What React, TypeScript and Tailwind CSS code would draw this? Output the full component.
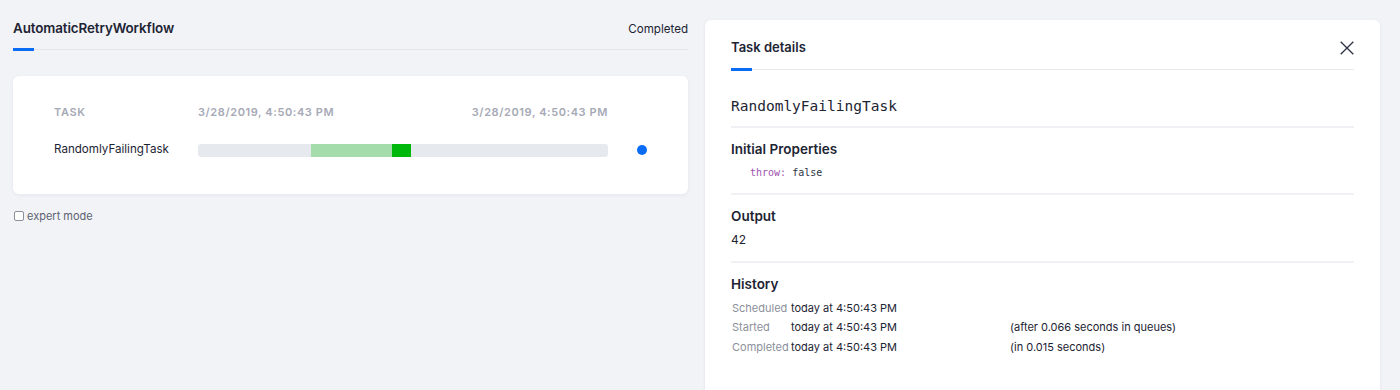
const history = [
  { label: "Scheduled", when: "today at 4:50:43 PM", note: "" },
  { label: "Started", when: "today at 4:50:43 PM", note: "(after 0.066 seconds in queues)" },
  { label: "Completed", when: "today at 4:50:43 PM", note: "(in 0.015 seconds)" },
];

function CloseIcon() {
  return (
    <svg width="14" height="14" viewBox="0 0 14 14" fill="none" stroke="#2a3140" strokeWidth="1.3">
      <path d="M0.7 0.7L13.3 13.3M13.3 0.7L0.7 13.3" />
    </svg>
  );
}

export default function App() {
  return (
    <div
      className="flex h-[390px] w-[1400px] gap-[17px] overflow-hidden bg-[#f2f3f7] pl-[13px] pr-[20px] text-[#1d2433]"
      style={{ fontFamily: '"Inter", "Noto Sans", sans-serif' }}
    >
      {/* Left column */}
      <div className="flex w-[675px] flex-col">
        <div className="relative flex h-[50px] items-end justify-between border-b border-[#e2e4ea] pb-[11px]">
          <span className="text-[13.4px] font-semibold tracking-[-0.1px]">AutomaticRetryWorkflow</span>
          <span className="text-[11.6px]">Completed</span>
          <span className="absolute -bottom-[2px] left-0 h-[3px] w-[21px] bg-[#0a6cf5]" />
        </div>

        <div className="mt-[26px] h-[118px] rounded-[6px] bg-white px-[41px] pt-[28px] shadow-[0_1px_4px_rgba(30,40,70,0.06)]">
          <div className="flex h-[16px] items-center text-[11px] font-semibold tracking-[0.6px] text-[#a6a9b6]">
            <span className="w-[144px]">TASK</span>
            <div className="flex w-[410px] justify-between">
              <span>3/28/2019, 4:50:43 PM</span>
              <span>3/28/2019, 4:50:43 PM</span>
            </div>
          </div>
          <div className="mt-[23px] flex h-[14px] items-center">
            <span className="w-[144px] text-[11.6px]">RandomlyFailingTask</span>
            <div className="flex h-[13px] w-[410px] overflow-hidden rounded-[3px] bg-[#e6e9ed]">
              <div className="w-[113px]" />
              <div className="w-[81px] bg-[#a4dcab]" />
              <div className="w-[19px] bg-[#00b80b]" />
            </div>
            <span className="ml-[29px] h-[10px] w-[10px] rounded-full bg-[#0a6cf5]" />
          </div>
        </div>

        <label className="mt-[14px] flex items-center gap-[3px] pl-[1px] text-[11px] text-[#5c6270]">
          <span className="h-[10px] w-[10px] rounded-[2px] border border-[#8a8f9a] bg-white" />
          expert mode
        </label>
      </div>

      {/* Right panel */}
      <div className="mt-[20px] h-[400px] w-[675px] rounded-[6px] bg-white px-[26px] shadow-[0_1px_4px_rgba(30,40,70,0.06)]">
        <div className="relative flex h-[50px] items-end justify-between border-b border-[#e8eaee] pb-[12px]">
          <span className="text-[13px] font-semibold">Task details</span>
          <span className="mb-[2px]">
            <CloseIcon />
          </span>
          <span className="absolute -bottom-[2px] left-0 h-[3px] w-[21px] bg-[#0a6cf5]" />
        </div>

        <div className="flex h-[58px] items-end border-b-2 border-[#f0f1f4] pb-[8px]">
          <span
            className="text-[14.5px]"
            style={{ fontFamily: '"DejaVu Sans Mono", "Liberation Mono", monospace' }}
          >
            RandomlyFailingTask
          </span>
        </div>

        <div className="h-[67px] border-b-2 border-[#f0f1f4] pt-[11px]">
          <div className="text-[13.5px] font-semibold">Initial Properties</div>
          <div
            className="mt-[6px] pl-[19px] text-[10px]"
            style={{ fontFamily: '"DejaVu Sans Mono", "Liberation Mono", monospace' }}
          >
            <span className="text-[#a054b0]">throw:</span> <span className="text-[#2c3445]">false</span>
          </div>
        </div>

        <div className="h-[68px] border-b-2 border-[#f0f1f4] pt-[11px]">
          <div className="text-[13.5px] font-semibold">Output</div>
          <div className="mt-[5px] text-[12px]">42</div>
        </div>

        <div className="pt-[11px]">
          <div className="text-[13.5px] font-semibold">History</div>
          <div className="mt-[4px] flex flex-col text-[11px]">
            {history.map((h) => (
              <div key={h.label} className="flex h-[19.5px] items-center">
                <span className="w-[60px] pl-[1px] text-[#8c909b]">{h.label}</span>
                <span className="w-[219px]">{h.when}</span>
                <span>{h.note}</span>
              </div>
            ))}
          </div>
        </div>
      </div>
    </div>
  );
}
